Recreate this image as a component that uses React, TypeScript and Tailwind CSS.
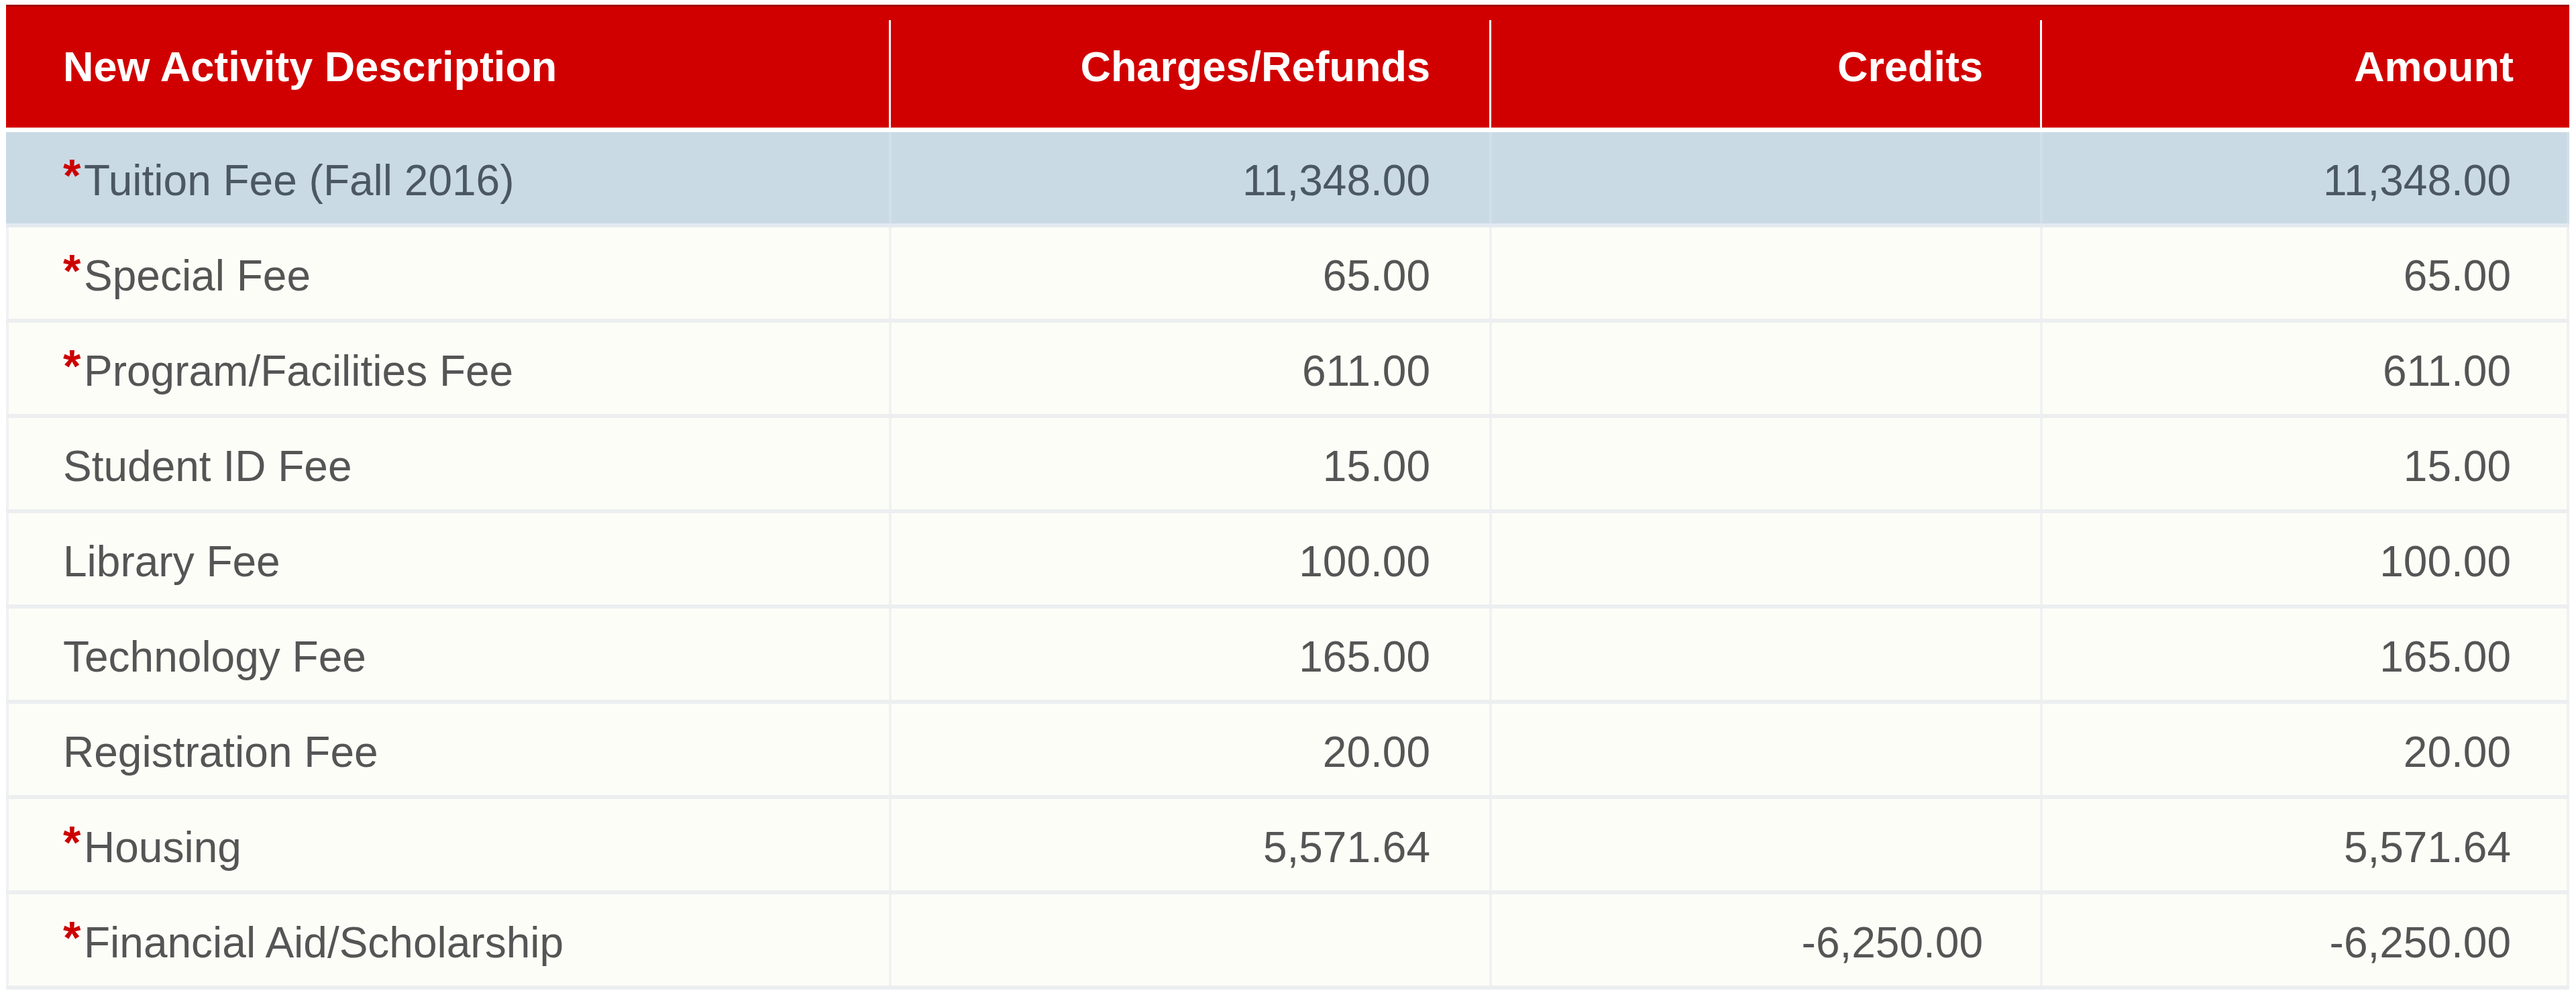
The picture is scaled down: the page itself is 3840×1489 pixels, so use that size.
import React from "react";

const ROWS = [
  { star: true, label: "Tuition Fee (Fall 2016)", charge: "11,348.00", credit: "", amount: "11,348.00", hi: true },
  { star: true, label: "Special Fee", charge: "65.00", credit: "", amount: "65.00" },
  { star: true, label: "Program/Facilities Fee", charge: "611.00", credit: "", amount: "611.00" },
  { star: false, label: "Student ID Fee", charge: "15.00", credit: "", amount: "15.00" },
  { star: false, label: "Library Fee", charge: "100.00", credit: "", amount: "100.00" },
  { star: false, label: "Technology Fee", charge: "165.00", credit: "", amount: "165.00" },
  { star: false, label: "Registration Fee", charge: "20.00", credit: "", amount: "20.00" },
  { star: true, label: "Housing", charge: "5,571.64", credit: "", amount: "5,571.64" },
  { star: true, label: "Financial Aid/Scholarship", charge: "", credit: "-6,250.00", amount: "-6,250.00" },
];

export default function App() {
  return (
    <main className="min-h-screen bg-white font-['Liberation_Sans',Arial,sans-serif]">
      <div className="ml-[9px] w-[3821px] pt-[7px]">
        {/* Header */}
        <div className="grid grid-cols-[1316px_895px_821px_789px] h-[183px] bg-[#d10000] border-t-[3px] border-[#a30000] pt-[20px] text-white font-bold text-[63px] leading-none">
          <div className="flex items-center pl-[85px] pb-[22px]">New Activity Description</div>
          <div className="flex items-center justify-end pr-[88px] pb-[22px] border-l-[3px] border-white">Charges/Refunds</div>
          <div className="flex items-center justify-end pr-[85px] pb-[22px] border-l-[3px] border-white">Credits</div>
          <div className="flex items-center justify-end pr-[83px] pb-[22px] border-l-[3px] border-white">Amount</div>
        </div>
        <div className="h-[7px] bg-white border-t border-[#f6d6d6]" />

        {/* Body */}
        {ROWS.map((r, i) => (
          <div
            key={i}
            className={`grid grid-cols-[1316px_895px_821px_789px] h-[142px] border-b-[6px] text-[64px] leading-none ${
              r.hi ? "bg-[#c9dae5] text-[#4b5863] border-[#e3eaef]" : "bg-[#fdfdf8] text-[#555555] border-[#eceef0]"
            }`}
          >
            <div className={`flex items-center pl-[81px] pt-[8px] border-l-[4px] ${r.hi ? "border-[#c9dae5]" : "border-[#f0f1f3]"}`}>
              {r.star ? (
                <span className="relative -top-[8px] w-[31px] text-[68px] font-bold text-[#cc0000]">*</span>
              ) : null}
              <span>{r.label}</span>
            </div>
            <div className={`flex items-center justify-end pr-[88px] pt-[8px] border-l-[4px] ${r.hi ? "border-[#d2dfe8]" : "border-[#f0f1f3]"}`}>
              {r.charge}
            </div>
            <div className={`flex items-center justify-end pr-[85px] pt-[8px] border-l-[4px] ${r.hi ? "border-[#d2dfe8]" : "border-[#f0f1f3]"}`}>
              {r.credit}
            </div>
            <div className={`flex items-center justify-end pr-[83px] pt-[8px] border-l-[4px] border-r-[4px] ${r.hi ? "border-[#d2dfe8]" : "border-[#f0f1f3]"}`}>
              {r.amount}
            </div>
          </div>
        ))}
      </div>
    </main>
  );
}
